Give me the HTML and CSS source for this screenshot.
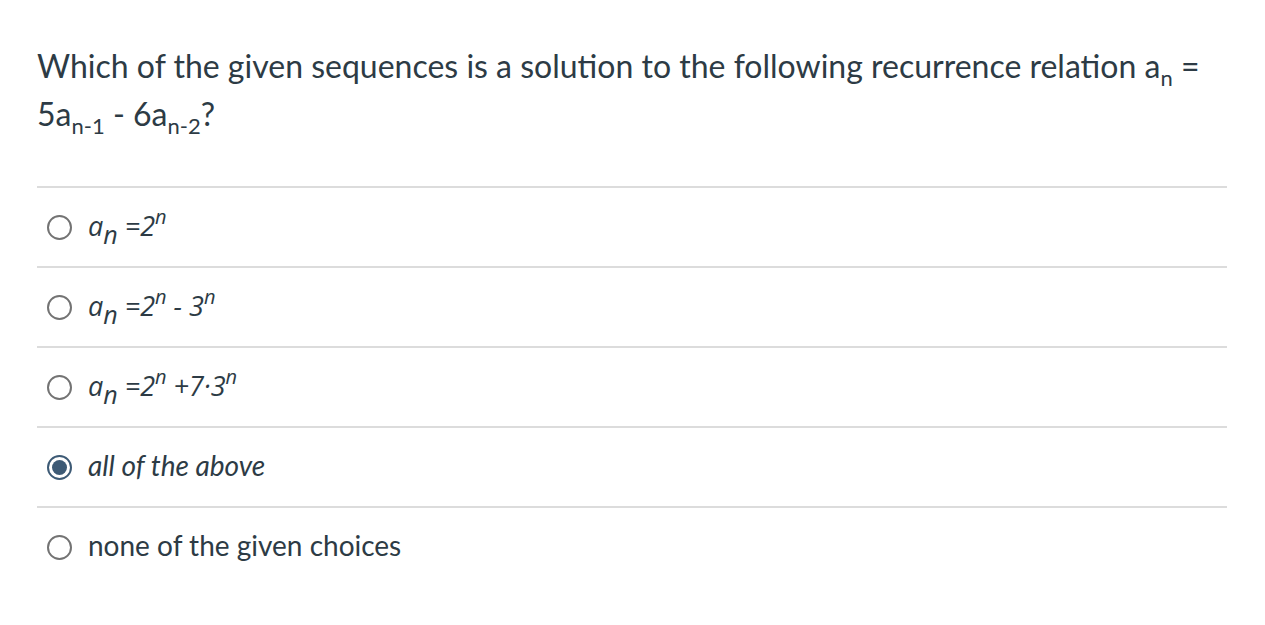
FILE: index.html
```html
<!DOCTYPE html>
<html>
<head>
<meta charset="utf-8">
<link rel="stylesheet" href="styles.css">
</head>
<body>
<div class="quiz">
  <div class="question">Which of the given sequences is a solution to the following recurrence relation a<sub>n</sub> = 5a<sub>n-1</sub> - 6a<sub>n-2</sub>?</div>
  <div class="answers">
    <label class="answer">
      <span class="radio"></span>
      <span class="math">a<sub>n</sub> =2<sup>n</sup></span>
    </label>
    <label class="answer">
      <span class="radio"></span>
      <span class="math">a<sub>n</sub> =2<sup>n</sup> - 3<sup>n</sup></span>
    </label>
    <label class="answer">
      <span class="radio"></span>
      <span class="math">a<sub>n</sub> =2<sup>n</sup> +7·3<sup>n</sup></span>
    </label>
    <label class="answer">
      <span class="radio checked"></span>
      <span class="text italic">all of the above</span>
    </label>
    <label class="answer">
      <span class="radio"></span>
      <span class="text">none of the given choices</span>
    </label>
  </div>
</div>
</body>
</html>
```

FILE: styles.css
```css
html, body {
  margin: 0;
  padding: 0;
  background: #ffffff;
}
.quiz {
  width: 1190px;
  padding: 42px 0 0 37px;
  font-family: Lato, "Open Sans", sans-serif;
  color: #2d3b45;
}
.question {
  font-size: 32px;
  line-height: 48px;
  padding-bottom: 48px;
  border-bottom: 2px solid #dcdcdc;
}
.question sub {
  font-size: 22px;
  line-height: 0;
  vertical-align: -8px;
}
.answer {
  display: flex;
  align-items: center;
  height: 78px;
  border-bottom: 2px solid #dcdcdc;
}
.answer:last-child {
  border-bottom: none;
}
.radio {
  box-sizing: border-box;
  width: 25px;
  height: 25px;
  border: 2px solid #737373;
  border-radius: 50%;
  margin-left: 10px;
  margin-right: 16px;
  flex: none;
  position: relative;
}
.radio.checked {
  border: 2px solid #3d5a75;
}
.radio.checked::after {
  content: "";
  position: absolute;
  left: 3px;
  top: 3px;
  width: 15px;
  height: 15px;
  border-radius: 50%;
  background: #3d5a75;
}
.text {
  font-size: 28px;
  padding-bottom: 4px;
}
.italic {
  font-style: italic;
}
.math {
  font-family: "Open Sans", "Noto Sans", sans-serif;
  font-style: italic;
  font-size: 27px;
  padding-bottom: 4px;
}
.math sub {
  font-size: 25px;
  line-height: 0;
  vertical-align: -8px;
}
.math sup {
  font-size: 20px;
  line-height: 0;
  vertical-align: 12px;
}
```
